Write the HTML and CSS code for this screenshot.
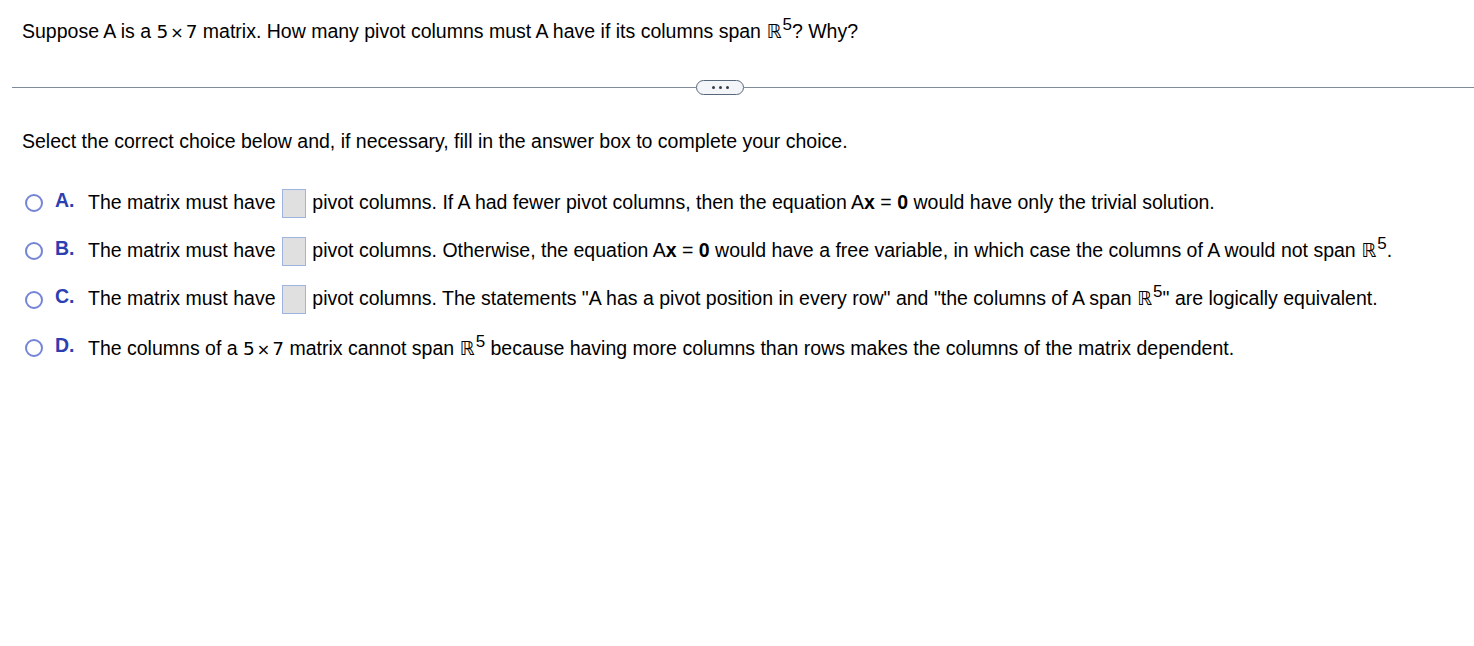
FILE: index.html
```html
<!DOCTYPE html>
<html>
<head>
<meta charset="utf-8">
<link rel="stylesheet" href="styles.css">
</head>
<body>
<div class="page">
  <p class="question">Suppose A is a <span class="math">5<span class="times">×</span>7</span> matrix. How many pivot columns must A have if its columns span <span class="bb">ℝ</span><sup>5</sup>? Why?</p>
  <div class="divider">
    <span class="line left"></span>
    <span class="pill"><i></i><i></i><i></i></span>
    <span class="line"></span>
  </div>
  <p class="instr">Select the correct choice below and, if necessary, fill in the answer box to complete your choice.</p>
  <ul class="choices">
    <li class="choice"><span class="radio"></span><span class="letter">A.</span><span class="text">The matrix must have <span class="box"></span> pivot columns. If A had fewer pivot columns, then the equation A<b>x</b> = <b>0</b> would have only the trivial solution.</span></li>
    <li class="choice"><span class="radio"></span><span class="letter">B.</span><span class="text">The matrix must have <span class="box"></span> pivot columns. Otherwise, the equation A<b>x</b> = <b>0</b> would have a free variable, in which case the columns of A would not span <span class="bb">ℝ</span><sup>5</sup>.</span></li>
    <li class="choice"><span class="radio"></span><span class="letter">C.</span><span class="text">The matrix must have <span class="box"></span> pivot columns. The statements "A has a pivot position in every row" and "the columns of A span <span class="bb">ℝ</span><sup>5</sup>" are logically equivalent.</span></li>
    <li class="choice"><span class="radio"></span><span class="letter">D.</span><span class="text">The columns of a <span class="math">5<span class="times">×</span>7</span> matrix cannot span <span class="bb">ℝ</span><sup>5</sup> because having more columns than rows makes the columns of the matrix dependent.</span></li>
  </ul>
</div>
</body>
</html>
```
FILE: styles.css
```css
html, body {
  margin: 0;
  padding: 0;
  background: #fff;
}
body {
  font-family: "Liberation Sans", Arial, sans-serif;
  font-size: 19.5px;
  color: #000;
}
.page {
  padding: 17px 0 0 12px;
}
.question {
  margin: 0 0 0 10px;
  line-height: 28px;
}
.math {
  font-family: "DejaVu Sans", sans-serif;
  font-size: 18.5px;
}
.times {
  margin: 0 2px;
  font-size: 16px;
}
.bb {
  font-family: "DejaVu Sans", sans-serif;
  font-size: 19px;
}
sup {
  font-size: 17px;
  line-height: 0;
  vertical-align: 8px;
  margin-left: 1px;
}
.divider {
  display: flex;
  align-items: center;
  margin-top: 32px;
  height: 16px;
}
.line {
  flex: 1;
  height: 1px;
  background: #7f8a9a;
}
.line.left {
  flex: none;
  width: 684px;
}
.pill {
  width: 46px;
  height: 13px;
  border: 1px solid #56687a;
  border-radius: 8px;
  background: #f3f5f8;
  display: flex;
  align-items: center;
  justify-content: center;
  gap: 4px;
}
.pill i {
  width: 3px;
  height: 3px;
  border-radius: 50%;
  background: #333c47;
}
.instr {
  margin: 32px 0 0 10px;
  line-height: 28px;
}
.choices {
  list-style: none;
  margin: 24px 0 0 0;
  padding: 0;
}
.choice {
  display: flex;
  align-items: center;
  height: 48.3px;
}
.radio {
  width: 14px;
  height: 14px;
  border: 2px solid #7485d6;
  border-radius: 50%;
  margin-left: 13px;
  box-sizing: content-box;
  flex: none;
}
.letter {
  color: #2c3fb0;
  font-weight: bold;
  margin-left: 12px;
  width: 33px;
  position: relative;
  top: -3px;
}
.text {
  white-space: nowrap;
}
.box {
  display: inline-block;
  width: 22px;
  height: 27px;
  border: 1px solid #9fb3e0;
  background: #e0e0e0;
  vertical-align: middle;
  margin: 0 1px;
}
```
